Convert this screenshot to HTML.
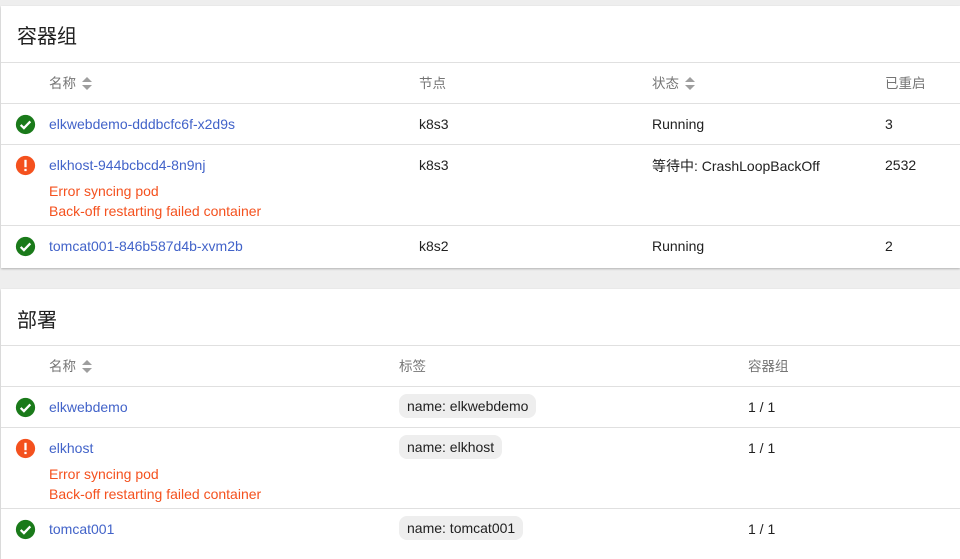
<!DOCTYPE html>
<html><head><meta charset="utf-8"><style>
*{margin:0;padding:0;box-sizing:border-box}
body{width:960px;height:549px;background:#eeeeee;font-family:"Liberation Sans","Noto Sans CJK SC",sans-serif;font-size:14px;color:#212121;position:relative;overflow:hidden}
.card{position:absolute;left:1px;right:0;background:#fff;box-shadow:0 1px 2px rgba(0,0,0,.25)}
.title{position:absolute;left:16px;font-size:20px;color:#212121}
.line{position:absolute;left:0;right:0;height:1px;background:#e0e0e0}
.t{position:absolute;white-space:nowrap}
.h{color:#757575;font-size:13.5px}
.a{color:#4263c9}
.e{color:#f4511e}
.chip{position:absolute;background:#eeeeee;border-radius:8px;padding:0 8px;height:24px;line-height:24px;white-space:nowrap}
.ic{position:absolute;left:14px;width:21px;height:21px}
.sort{display:inline-block;vertical-align:middle;margin-left:6px;width:10px;height:14px;position:relative}
.sort:before{content:"";position:absolute;left:0;top:0;border:5px solid transparent;border-top:0;border-bottom:5px solid #9e9e9e}
.sort:after{content:"";position:absolute;left:0;top:8px;border:5px solid transparent;border-bottom:0;border-top:5px solid #9e9e9e}
</style></head><body>
<svg width="0" height="0" style="position:absolute"><defs>
<symbol id="ok" viewBox="0 0 24 24"><circle cx="12" cy="12" r="11" fill="#1a7a1a"/><path d="M6.5 12.5l3.7 3.6 7.3-7.6" stroke="#fff" stroke-width="2.6" fill="none"/></symbol>
<symbol id="er" viewBox="0 0 24 24"><circle cx="12" cy="12" r="11" fill="#f4511e"/><rect x="10.7" y="5.5" width="2.6" height="8.5" fill="#fff"/><rect x="10.7" y="15.8" width="2.6" height="2.6" fill="#fff"/></symbol>
</defs></svg>

<div class="card" style="top:6px;height:262px">
<div class="title" style="top:14px">容器组</div>
<div class="line" style="top:56px"></div>
<div class="t h" style="left:48px;top:66px">名称<span class="sort"></span></div>
<div class="t h" style="left:418px;top:66px">节点</div>
<div class="t h" style="left:651px;top:66px">状态<span class="sort"></span></div>
<div class="t h" style="left:884px;top:66px">已重启</div>
<div class="line" style="top:97px"></div>
<svg class="ic" style="top:108px"><use href="#ok"/></svg>
<div class="t a" style="left:48px;top:110px">elkwebdemo-dddbcfc6f-x2d9s</div>
<div class="t" style="left:418px;top:110px">k8s3</div>
<div class="t" style="left:651px;top:110px">Running</div>
<div class="t" style="left:884px;top:110px">3</div>
<div class="line" style="top:138px"></div>
<svg class="ic" style="top:149px"><use href="#er"/></svg>
<div class="t a" style="left:48px;top:151px">elkhost-944bcbcd4-8n9nj</div>
<div class="t e" style="left:48px;top:177px">Error syncing pod</div>
<div class="t e" style="left:48px;top:197px">Back-off restarting failed container</div>
<div class="t" style="left:418px;top:151px">k8s3</div>
<div class="t" style="left:651px;top:150px">等待中: CrashLoopBackOff</div>
<div class="t" style="left:884px;top:151px">2532</div>
<div class="line" style="top:219px"></div>
<svg class="ic" style="top:230px"><use href="#ok"/></svg>
<div class="t a" style="left:48px;top:232px">tomcat001-846b587d4b-xvm2b</div>
<div class="t" style="left:418px;top:232px">k8s2</div>
<div class="t" style="left:651px;top:232px">Running</div>
<div class="t" style="left:884px;top:232px">2</div>
</div>

<div class="card" style="top:289px;height:270px">
<div class="title" style="top:15px">部署</div>
<div class="line" style="top:56px"></div>
<div class="t h" style="left:48px;top:66px">名称<span class="sort"></span></div>
<div class="t h" style="left:398px;top:66px">标签</div>
<div class="t h" style="left:747px;top:66px">容器组</div>
<div class="line" style="top:97px"></div>
<svg class="ic" style="top:108px"><use href="#ok"/></svg>
<div class="t a" style="left:48px;top:110px">elkwebdemo</div>
<div class="chip" style="left:398px;top:105px">name: elkwebdemo</div>
<div class="t" style="left:747px;top:110px">1 / 1</div>
<div class="line" style="top:138px"></div>
<svg class="ic" style="top:149px"><use href="#er"/></svg>
<div class="t a" style="left:48px;top:151px">elkhost</div>
<div class="t e" style="left:48px;top:177px">Error syncing pod</div>
<div class="t e" style="left:48px;top:197px">Back-off restarting failed container</div>
<div class="chip" style="left:398px;top:146px">name: elkhost</div>
<div class="t" style="left:747px;top:151px">1 / 1</div>
<div class="line" style="top:219px"></div>
<svg class="ic" style="top:230px"><use href="#ok"/></svg>
<div class="t a" style="left:48px;top:232px">tomcat001</div>
<div class="chip" style="left:398px;top:227px">name: tomcat001</div>
<div class="t" style="left:747px;top:232px">1 / 1</div>
</div>
</body></html>
